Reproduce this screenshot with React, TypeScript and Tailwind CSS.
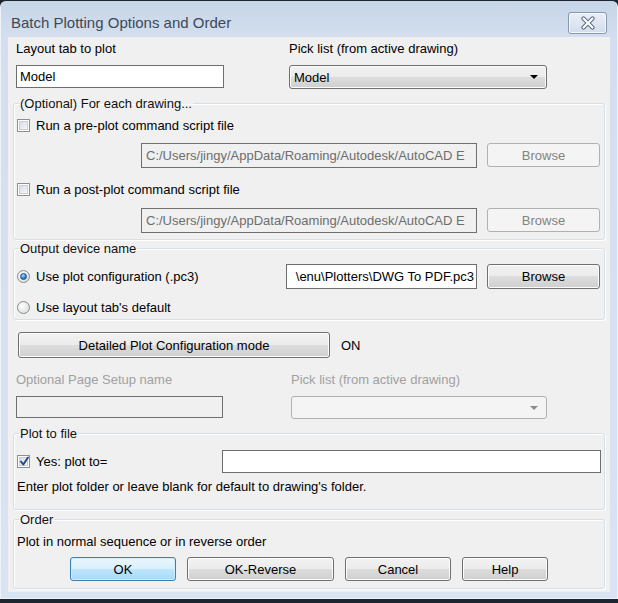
import React from 'react';

const btn =
  'flex items-center justify-center rounded-[3px] border border-[#707070] bg-[linear-gradient(to_bottom,#f2f2f2_0%,#ebebeb_50%,#dddddd_50%,#cfcfcf_100%)] shadow-[inset_0_0_0_1px_#fcfcfc] text-[13px] text-black';

const btnOff =
  'flex items-center justify-center rounded-[3px] border border-[#adb2b5] bg-[#f4f4f4] text-[13px] text-[#838383]';

function Check({ on }: { on?: boolean }) {
  return (
    <span className="relative flex h-[13px] w-[13px] shrink-0 items-center justify-center border border-[#8e8f8f] bg-white">
      <span className="absolute inset-[1px] border border-[#c9ccd1] bg-[linear-gradient(135deg,#d9dde3,#f6f7f8)]" />
      {on && (
        <svg viewBox="0 0 13 13" className="absolute -top-[1px] left-0 h-[13px] w-[13px]">
          <path d="M3 6.5 L5.3 9.5 L10 2.5" fill="none" stroke="#26498e" strokeWidth="2" strokeLinecap="round" strokeLinejoin="round" />
        </svg>
      )}
    </span>
  );
}

function Radio({ on }: { on?: boolean }) {
  return (
    <span className="flex h-[13px] w-[13px] shrink-0 items-center justify-center rounded-full border border-[#8a8a8a] bg-[radial-gradient(circle_at_35%_35%,#ffffff,#d4d6d9)]">
      {on && (
        <span className="h-[7px] w-[7px] rounded-full border border-[#1c4f8a] bg-[radial-gradient(circle_at_40%_30%,#a9ddff,#2a7fcf_60%,#174f96)]" />
      )}
    </span>
  );
}

function Legend({ children }: { children: React.ReactNode }) {
  return <legend className="ml-[2px] px-[1px] text-[13px] leading-[15px] text-[#111]">{children}</legend>;
}

const group =
  'mx-[5px] rounded-[3px] border border-[#d5dfe5] shadow-[inset_1px_1px_0_#ffffff,1px_1px_0_#ffffff] pl-[3px]';

export default function App() {
  return (
    <div className="h-[603px] w-[618px] overflow-hidden bg-[#1c2530] pt-[1px] font-['Liberation_Sans',Arial,sans-serif] text-[13px] leading-[15px] text-black">
      <div className="flex h-[598px] flex-col rounded-t-[6px] border border-t-0 border-[#eef3f9] bg-[linear-gradient(to_bottom,#c6d5e8_0px,#d3dfee_36px,#d9e4f2_100%)]">
        {/* title bar */}
        <div className="flex h-[36px] items-start justify-between pl-[10px] pr-[10px]">
          <span className="mt-[13px] text-[15px] leading-[18px] text-[#3d4957]">Batch Plotting Options and Order</span>
          <span className="mt-[11px] flex h-[22px] w-[39px] items-center justify-center rounded-[3px] border border-[#8797ac] bg-[linear-gradient(to_bottom,#e9eff7,#d2ddeb)] shadow-[inset_0_0_0_1px_#f4f7fb]">
            <svg viewBox="0 0 16 14" className="h-[14px] w-[16px]">
              <path d="M3.5 2.5 L12.5 11.5 M12.5 2.5 L3.5 11.5" stroke="#5b6a7e" strokeWidth="4.2" strokeLinecap="round" />
              <path d="M3.5 2.5 L12.5 11.5 M12.5 2.5 L3.5 11.5" stroke="#ffffff" strokeWidth="2.2" strokeLinecap="round" />
            </svg>
          </span>
        </div>

        {/* client area */}
        <div className="mx-[7px] flex h-[555px] flex-col bg-[#f0f0f0]">
          <div className="mt-[4px] grid grid-cols-[273px_1fr] pl-[8px]">
            <span>Layout tab to plot</span>
            <span>Pick list (from active drawing)</span>
          </div>
          <div className="mt-[9px] grid grid-cols-[273px_1fr] items-start pl-[8px]">
            <div className="flex h-[23px] w-[208px] items-center border border-[#6e6e6e] bg-white pl-[3px]">Model</div>
            <div className={btn + ' h-[24px] w-[258px] !justify-between pl-[4px] pr-[8px]'}>
              <span>Model</span>
              <svg viewBox="0 0 8 4" className="h-[4px] w-[8px]">
                <path d="M0 0 H8 L4 4 Z" fill="#000" />
              </svg>
            </div>
          </div>

          <fieldset className={group + ' mt-[7px] pb-[6px]'}>
            <Legend>(Optional) For each drawing...</Legend>
            <div className="mt-[7px] flex h-[15px] items-center gap-[6px]">
              <Check />
              <span>Run a pre-plot command script file</span>
            </div>
            <div className="mt-[10px] flex items-start">
              <div className="ml-[124px] flex h-[25px] w-[336px] items-center overflow-hidden whitespace-nowrap border border-[#6f6f6f] pl-[4px] text-[#6d6d6d]">
                C:/Users/jingy/AppData/Roaming/Autodesk/AutoCAD E
              </div>
              <div className={btnOff + ' ml-[10px] h-[24px] w-[113px]'}>Browse</div>
            </div>
            <div className="mt-[14px] flex h-[15px] items-center gap-[6px]">
              <Check />
              <span>Run a post-plot command script file</span>
            </div>
            <div className="mt-[11px] flex items-start">
              <div className="ml-[124px] flex h-[25px] w-[336px] items-center overflow-hidden whitespace-nowrap border border-[#6f6f6f] pl-[4px] text-[#6d6d6d]">
                C:/Users/jingy/AppData/Roaming/Autodesk/AutoCAD E
              </div>
              <div className={btnOff + ' ml-[10px] h-[24px] w-[113px]'}>Browse</div>
            </div>
          </fieldset>

          <fieldset className={group + ' mt-[1px] pb-[4px]'}>
            <Legend>Output device name</Legend>
            <div className="mt-[8px] flex h-[25px] items-center">
              <div className="flex w-[269px] items-center gap-[6px]">
                <Radio on />
                <span>Use plot configuration (.pc3)</span>
              </div>
              <div className="flex h-[25px] w-[191px] items-center justify-end overflow-hidden whitespace-nowrap border border-[#6e6e6e] bg-white pr-[2px]">
                \enu\Plotters\DWG To PDF.pc3
              </div>
              <div className={btn + ' ml-[10px] h-[25px] w-[113px]'}>Browse</div>
            </div>
            <div className="mt-[11px] flex h-[15px] items-center gap-[6px]">
              <Radio />
              <span>Use layout tab's default</span>
            </div>
          </fieldset>

          <div className="mt-[12px] flex items-center pl-[10px]">
            <div className={btn + ' h-[26px] w-[312px]'}>Detailed Plot Configuration mode</div>
            <span className="ml-[11px]">ON</span>
          </div>

          <div className="mt-[14px] grid grid-cols-[275px_1fr] pl-[8px] text-[#a0a0a0]">
            <span>Optional Page Setup name</span>
            <span>Pick list (from active drawing)</span>
          </div>
          <div className="mt-[9px] grid grid-cols-[275px_1fr] items-start pl-[8px]">
            <div className="h-[22px] w-[207px] border border-[#6f6f6f]" />
            <div className="flex h-[23px] w-[256px] items-center justify-end rounded-[3px] border border-[#adb2b5] bg-[#f4f4f4] pr-[8px]">
              <svg viewBox="0 0 8 4" className="h-[4px] w-[8px]">
                <path d="M0 0 H8 L4 4 Z" fill="#8a8a8a" />
              </svg>
            </div>
          </div>

          <fieldset className={group + ' mt-[7px] pb-[15px]'}>
            <Legend>Plot to file</Legend>
            <div className="mt-[9px] flex h-[23px] items-center">
              <div className="flex w-[205px] items-center gap-[6px]">
                <Check on />
                <span>Yes: plot to=</span>
              </div>
              <div className="h-[23px] w-[379px] border border-[#6e6e6e] bg-white" />
            </div>
            <div className="mt-[6px]">Enter plot folder or leave blank for default to drawing's folder.</div>
          </fieldset>

          <fieldset className={group + ' mt-[2px] pb-[7px]'}>
            <Legend>Order</Legend>
            <div className="mt-[7px]">Plot in normal sequence or in reverse order</div>
            <div className="mt-[8px] flex gap-[11px] pl-[53px]">
              <div className="flex h-[24px] w-[106px] items-center justify-center rounded-[3px] border border-[#3c7fb1] bg-[linear-gradient(to_bottom,#eaf6fd_0%,#d9f0fc_50%,#bee6fd_50%,#a7d9f5_100%)] shadow-[inset_0_0_0_1px_#cdeefd]">
                OK
              </div>
              <div className={btn + ' h-[24px] w-[147px]'}>OK-Reverse</div>
              <div className={btn + ' h-[24px] w-[106px]'}>Cancel</div>
              <div className={btn + ' h-[24px] w-[86px]'}>Help</div>
            </div>
          </fieldset>
        </div>
      </div>
    </div>
  );
}
